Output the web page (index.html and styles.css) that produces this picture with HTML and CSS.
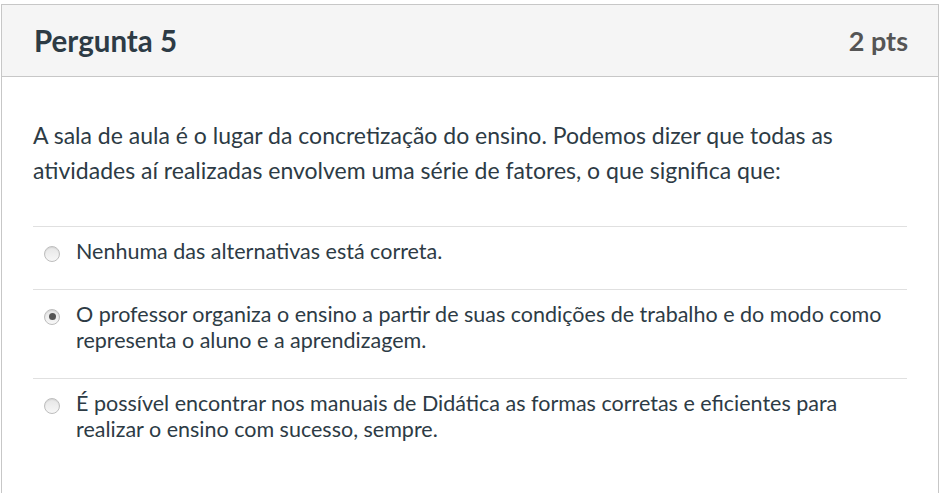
FILE: index.html
```html
<!DOCTYPE html>
<html lang="pt">
<head>
<meta charset="utf-8">
<link rel="stylesheet" href="styles.css">
</head>
<body>
<div class="question">
  <div class="header">
    <span class="title">Pergunta 5</span>
    <span class="points">2 pts</span>
  </div>
  <div class="content">
    <p class="qtext">A sala de aula é o lugar da concretização do ensino. Podemos dizer que todas as atividades aí realizadas envolvem uma série de fatores, o que significa que:</p>
    <div class="answers">
      <label class="answer">
        <span class="radio"></span>
        <span class="atext">Nenhuma das alternativas está correta.</span>
      </label>
      <label class="answer">
        <span class="radio checked"></span>
        <span class="atext">O professor organiza o ensino a partir de suas condições de trabalho e do modo como representa o aluno e a aprendizagem.</span>
      </label>
      <label class="answer">
        <span class="radio"></span>
        <span class="atext">É possível encontrar nos manuais de Didática as formas corretas e eficientes para realizar o ensino com sucesso, sempre.</span>
      </label>
    </div>
  </div>
</div>
</body>
</html>
```

FILE: styles.css
```css
html, body {
  margin: 0;
  padding: 0;
  background: #ffffff;
}
body {
  font-family: Lato, "Open Sans", sans-serif;
  color: #2d3b45;
  padding: 4px 0 0 1px;
  height: 489px;
  overflow: hidden;
}
.question {
  box-sizing: border-box;
  width: 938px;
  height: 600px;
  border: 1px solid #c7c7c7;
  border-bottom: none;
}
.header {
  box-sizing: border-box;
  height: 72px;
  background: #f5f5f5;
  border-bottom: 1px solid #c7c7c7;
  display: flex;
  justify-content: space-between;
  align-items: center;
  padding: 0 30px 0 32px;
}
.title {
  font-weight: 700;
  font-size: 29.5px;
  color: #2d3b45;
}
.points {
  font-weight: 700;
  font-size: 27px;
  color: #555555;
}
.content {
  padding: 41px 31px 0 31px;
}
.qtext {
  margin: 0 0 39px 0;
  font-size: 23px;
  line-height: 34.5px;
}
.answers {
  display: flex;
  flex-direction: column;
}
.answer {
  display: flex;
  align-items: flex-start;
  border-top: 1px solid #e0e0e0;
  padding: 11px 0 24px 0;
  font-size: 21.5px;
  line-height: 26.5px;
}
.radio {
  flex: none;
  box-sizing: border-box;
  width: 16px;
  height: 16px;
  margin: 8px 16px 0 11px;
  border-radius: 50%;
  border: 1px solid #bdbdbd;
  background: linear-gradient(#e6e6e6, #f7f7f7);
  box-shadow: inset 0 1px 1px rgba(0,0,0,0.08);
  display: flex;
  align-items: center;
  justify-content: center;
}
.radio.checked::after {
  content: "";
  width: 7px;
  height: 7px;
  border-radius: 50%;
  background: #555555;
}
.atext {
  flex: 1;
}
```
